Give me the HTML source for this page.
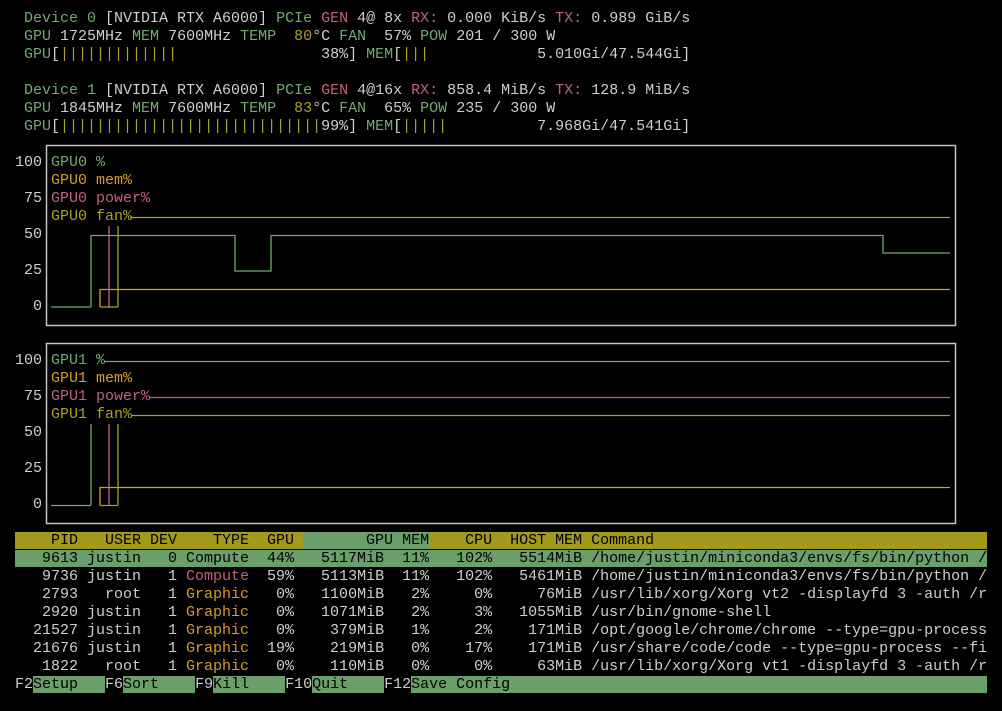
<!DOCTYPE html>
<html><head><meta charset="utf-8"><style>
html,body{margin:0;padding:0;background:#000;width:1002px;height:711px;overflow:hidden}
pre{position:absolute;left:15px;top:10px;margin:0;font-family:"Liberation Mono","DejaVu Sans Mono",monospace;font-size:15px;line-height:18px;color:#cfcfcf;white-space:pre}
.g{color:#72a872}.w{color:#cfcfcf}.p{color:#c4607f}.y{color:#aaa21e}.o{color:#dc9b22}
.hb{background:#a19a1d;color:#000}.hg{background:#6a9e6a;color:#000}
.sel{background:#6a9e6a;color:#000}
.fk{background:#6a9e6a;color:#000}
svg{position:absolute;left:0;top:0}
</style></head><body>
<svg width="1002" height="711" viewBox="0 0 1002 711">
<g fill="none" stroke="#c4c4c4" stroke-width="1.5">
<rect x="46.5" y="145.5" width="909" height="180"/>
<rect x="46.5" y="343.5" width="909" height="180"/>
</g>
<g fill="none" stroke-width="1.3">
<path d="M51 307H91" stroke="#72a872"/>
<path d="M91 307V235.5H235V271H271V235.5H883V253H950" stroke="#72a872"/>
<path d="M100 307V289.5H950" stroke="#dc9b22"/>
<path d="M109 307V226" stroke="#c4607f"/>
<path d="M118 307V226M100 307H118M130 217.5H950" stroke="#aaa21e"/>
<path d="M51 505.5H91" stroke="#72a872"/>
<path d="M91 505.5V424M104 361.5H950" stroke="#72a872"/>
<path d="M100 505.5V487.5H950" stroke="#dc9b22"/>
<path d="M109 505.5V424M149 397.5H950" stroke="#c4607f"/>
<path d="M118 505.5V424M100 505.5H118M131 415.5H950" stroke="#aaa21e"/>
</g>
</svg>
<pre> <span class="g">Device 0</span> [NVIDIA RTX A6000] <span class="g">PCIe</span> <span class="p">GEN</span> 4@ 8x <span class="p">RX:</span> 0.000 KiB/s <span class="p">TX:</span> 0.989 GiB/s
 <span class="g">GPU</span> 1725MHz <span class="g">MEM</span> 7600MHz <span class="g">TEMP</span>  <span class="y">80</span>°C <span class="g">FAN</span>  57% <span class="g">POW</span> 201 / 300 W
 <span class="g">GPU</span>[<span class="y">|||||||||||||</span>                38%] <span class="g">MEM</span>[<span class="y">|||</span>            5.010Gi/47.544Gi]

 <span class="g">Device 1</span> [NVIDIA RTX A6000] <span class="g">PCIe</span> <span class="p">GEN</span> 4@16x <span class="p">RX:</span> 858.4 MiB/s <span class="p">TX:</span> 128.9 MiB/s
 <span class="g">GPU</span> 1845MHz <span class="g">MEM</span> 7600MHz <span class="g">TEMP</span>  <span class="y">83</span>°C <span class="g">FAN</span>  65% <span class="g">POW</span> 235 / 300 W
 <span class="g">GPU</span>[<span class="y">|||||||||||||||||||||||||||||</span>99%] <span class="g">MEM</span>[<span class="y">|||||</span>          7.968Gi/47.541Gi]

100 <span class="g">GPU0 %</span>
    <span class="o">GPU0 mem%</span>
 75 <span class="p">GPU0 power%</span>
    <span class="y">GPU0 fan%</span>
 50

 25

  0


100 <span class="g">GPU1 %</span>
    <span class="o">GPU1 mem%</span>
 75 <span class="p">GPU1 power%</span>
    <span class="y">GPU1 fan%</span>
 50

 25

  0

<span class="hb">    PID   USER DEV    TYPE  GPU </span><span class="hg">       GPU MEM</span><span class="hb">    CPU  HOST MEM Command                                     </span>
<span class="sel">   9613 justin   0 Compute  44%   5117MiB  11%   102%   5514MiB /home/justin/miniconda3/envs/fs/bin/python /</span>
   9736 justin   1 <span class="p">Compute</span>  59%   5113MiB  11%   102%   5461MiB /home/justin/miniconda3/envs/fs/bin/python /
   2793   root   1 <span class="o">Graphic</span>   0%   1100MiB   2%     0%     76MiB /usr/lib/xorg/Xorg vt2 -displayfd 3 -auth /r
   2920 justin   1 <span class="o">Graphic</span>   0%   1071MiB   2%     3%   1055MiB /usr/bin/gnome-shell
  21527 justin   1 <span class="o">Graphic</span>   0%    379MiB   1%     2%    171MiB /opt/google/chrome/chrome --type=gpu-process
  21676 justin   1 <span class="o">Graphic</span>  19%    219MiB   0%    17%    171MiB /usr/share/code/code --type=gpu-process --fi
   1822   root   1 <span class="o">Graphic</span>   0%    110MiB   0%     0%     63MiB /usr/lib/xorg/Xorg vt1 -displayfd 3 -auth /r
F2<span class="fk">Setup   </span>F6<span class="fk">Sort    </span>F9<span class="fk">Kill    </span>F10<span class="fk">Quit    </span>F12<span class="fk">Save Config                                                     </span></pre>
</body></html>
